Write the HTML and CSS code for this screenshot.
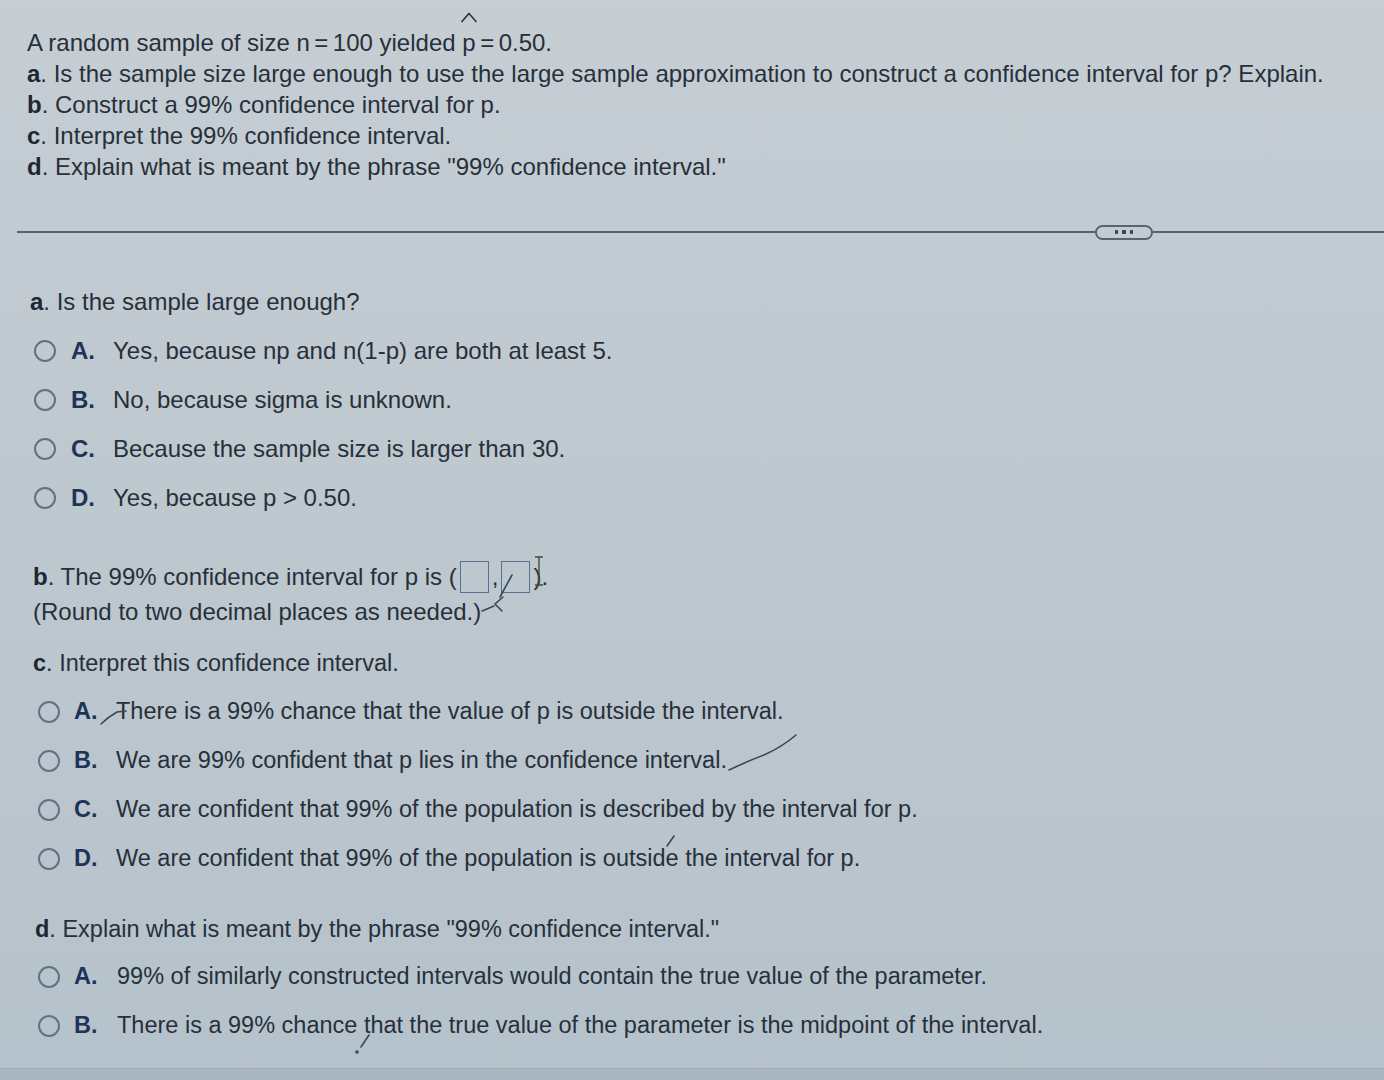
FILE: index.html
```html
<!DOCTYPE html>
<html lang="en">
<head>
<meta charset="utf-8">
<title>Confidence interval for p</title>
<link rel="stylesheet" href="styles.css">
</head>
<body>
<div class="page">
  <div class="question">
    <div class="qline">A random sample of size n<span class="eq">=</span>100 yielded <span class="phat">p<svg class="hat" width="18" height="11" viewBox="0 0 18 11" aria-hidden="true"><path d="M1.5 10 L9 1.5 L16.5 10" fill="none" stroke="#2a333e" stroke-width="1.6"/></svg></span><span class="eq">=</span>0.50.</div>
    <div class="qline"><b>a</b>. Is the sample size large enough to use the large sample approximation to construct a confidence interval for p? Explain.</div>
    <div class="qline"><b>b</b>. Construct a 99% confidence interval for p.</div>
    <div class="qline"><b>c</b>. Interpret the 99% confidence interval.</div>
    <div class="qline"><b>d</b>. Explain what is meant by the phrase "99% confidence interval."</div>
  </div>

  <div class="divider">
    <div class="rule rule-left"></div>
    <div class="more"><span></span><span></span><span></span></div>
    <div class="rule rule-right"></div>
  </div>

  <div class="part part-a">
    <div class="heading"><b>a</b>. Is the sample large enough?</div>
    <div class="option"><span class="radio"></span><span class="letter">A.</span><span>Yes, because np and n(1-p) are both at least 5.</span></div>
    <div class="option"><span class="radio"></span><span class="letter">B.</span><span>No, because sigma is unknown.</span></div>
    <div class="option"><span class="radio"></span><span class="letter">C.</span><span>Because the sample size is larger than 30.</span></div>
    <div class="option"><span class="radio"></span><span class="letter">D.</span><span>Yes, because p &gt; 0.50.</span></div>
  </div>

  <div class="part part-b">
    <div class="bline"><b>b</b>. The 99% confidence interval for p is (<span class="box"></span>,<span class="box"></span>).</div>
    <div class="bline">(Round to two decimal places as needed.)</div>
  </div>

  <div class="part part-c">
    <div class="heading"><b>c</b>. Interpret this confidence interval.</div>
    <div class="option"><span class="radio"></span><span class="letter">A.</span><span>There is a 99% chance that the value of p is outside the interval.</span></div>
    <div class="option"><span class="radio"></span><span class="letter">B.</span><span>We are 99% confident that p lies in the confidence interval.</span></div>
    <div class="option"><span class="radio"></span><span class="letter">C.</span><span>We are confident that 99% of the population is described by the interval for p.</span></div>
    <div class="option"><span class="radio"></span><span class="letter">D.</span><span>We are confident that 99% of the population is outside the interval for p.</span></div>
  </div>

  <div class="part part-d">
    <div class="heading"><b>d</b>. Explain what is meant by the phrase "99% confidence interval."</div>
    <div class="option"><span class="radio"></span><span class="letter">A.</span><span>99% of similarly constructed intervals would contain the true value of the parameter.</span></div>
    <div class="option"><span class="radio"></span><span class="letter">B.</span><span>There is a 99% chance that the true value of the parameter is the midpoint of the interval.</span></div>
  </div>
</div>
<div class="bottom-band"></div>

<svg class="marks" width="1384" height="1080" viewBox="0 0 1384 1080" aria-hidden="true">
  <g fill="none" stroke="#3b4757" stroke-width="1.6" stroke-linecap="round">
    <path d="M101 724 Q108 717 117 712 L126 711"/>
    <path d="M729 770 Q748 761 764 755 Q782 747 796 735"/>
    <path d="M512 575 L500 597"/>
    <path d="M482 611 L494 606 M503 597 L495 604 L502 611"/>
    <path d="M667 846 L674 836"/>
    <path d="M369 1035 L361 1047"/>
  </g>
  <g fill="none" stroke="#4a4a3a" stroke-width="1.4">
    <path d="M535 557 L543 557 M539 557 L539 585 M535 585 L543 585"/>
  </g>
  <circle cx="357" cy="1052" r="1.8" fill="#3b4757"/>
</svg>
</body>
</html>
```

FILE: styles.css
```css
* {
  box-sizing: border-box;
}

html, body {
  margin: 0;
  padding: 0;
}

body {
  width: 1384px;
  height: 1080px;
  overflow: hidden;
  position: relative;
  font-family: "Liberation Sans", Arial, sans-serif;
  font-size: 24px;
  color: #27303a;
  background: linear-gradient(180deg, #c6ced4 0%, #bec8cf 45%, #b6c2cb 100%);
}

b {
  font-weight: bold;
  color: #1e2731;
}

.page {
  height: 1068px;
}

.question {
  padding: 27px 0 0 27px;
}

.qline {
  line-height: 31px;
  height: 31px;
  white-space: nowrap;
}

.eq {
  margin: 0 4.5px;
}

.phat {
  position: relative;
  display: inline-block;
}

.hat {
  position: absolute;
  left: -2px;
  top: -15px;
}

.divider {
  display: flex;
  align-items: center;
  height: 16px;
  margin-top: 42px;
  padding-left: 17px;
}

.rule {
  height: 1.5px;
  background: #56616c;
}

.rule-left {
  width: 1078px;
}

.rule-right {
  flex: 1;
}

.more {
  width: 58px;
  height: 15px;
  border: 2px solid #59636d;
  border-radius: 8px;
  display: flex;
  align-items: center;
  justify-content: center;
  gap: 4px;
}

.more span {
  width: 3.5px;
  height: 3.5px;
  background: #39424c;
  border-radius: 1px;
}

.part {
  white-space: nowrap;
}

.part-a {
  margin-top: 37px;
  padding-left: 30px;
}

.part-a .heading {
  height: 49px;
  display: flex;
  align-items: center;
}

.option {
  height: 49px;
  display: flex;
  align-items: center;
}

.radio {
  width: 22px;
  height: 22px;
  border: 2.6px solid #607286;
  border-radius: 50%;
  flex: none;
  margin-left: 4px;
  margin-right: 15px;
}

.letter {
  width: 42px;
  flex: none;
  font-weight: bold;
  color: #1d3358;
}

.part-b {
  margin-top: 37px;
  padding-left: 33px;
}

.bline {
  height: 35px;
  line-height: 35px;
}

.box {
  display: inline-block;
  width: 29px;
  height: 32px;
  border: 1.5px solid #5b6f93;
  vertical-align: middle;
  margin: -4px 3px 0 3px;
}

.part-c {
  margin-top: 11px;
  padding-left: 33px;
  font-size: 23.5px;
}

.part-c .heading {
  height: 47px;
  display: flex;
  align-items: center;
}

.part-c .radio,
.part-d .radio {
  margin-left: 5px;
  margin-right: 14px;
}

.part-d {
  margin-top: 24px;
  padding-left: 35px;
  font-size: 23.5px;
}

.part-d .heading {
  height: 45px;
  display: flex;
  align-items: center;
}

.part-d .radio {
  margin-left: 3px;
}

.part-d .letter {
  width: 43px;
}

.bottom-band {
  height: 12px;
  background: #a9b6c0;
  border-top: 1px solid #9eabb5;
}

.marks {
  position: absolute;
  left: 0;
  top: 0;
  pointer-events: none;
}
```
